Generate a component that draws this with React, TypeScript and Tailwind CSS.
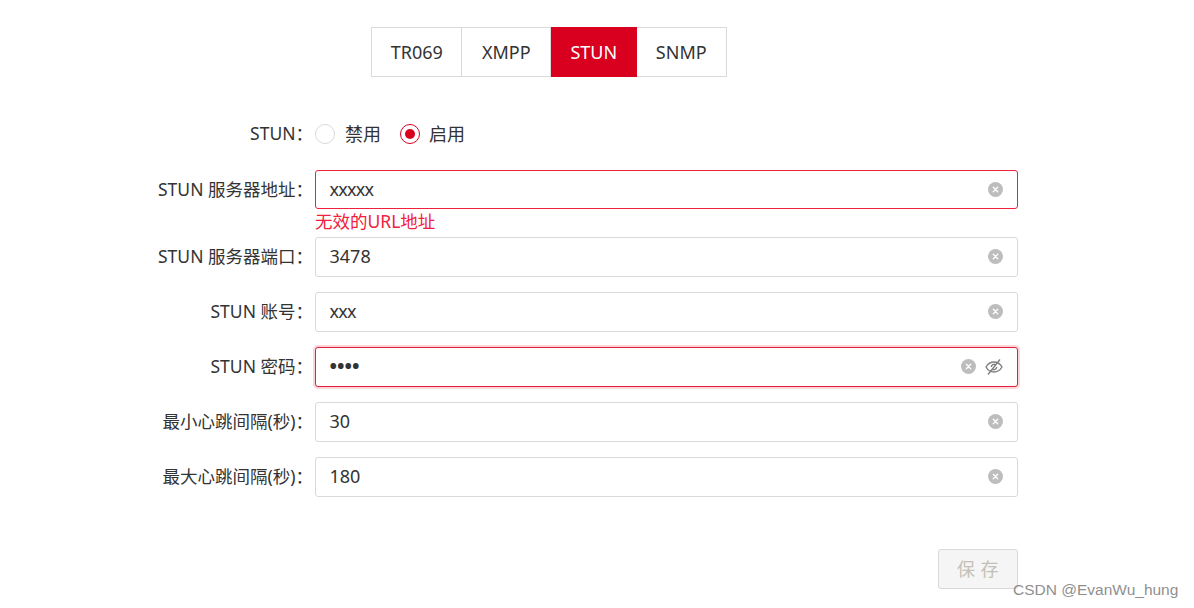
import { ReactNode } from 'react';

const font = { fontFamily: '"Noto Sans", "Noto Sans CJK SC", sans-serif' };

function ClearIcon() {
  return (
    <svg width="15" height="15" viewBox="0 0 15 15" className="mb-px shrink-0">
      <circle cx="7.500" cy="7.500" r="7.500" fill="#bdbdbd" />
      <path d="M5.300 5.300l4.400 4.400M9.700 5.300l-4.400 4.400" stroke="#fff" strokeWidth="1.300" strokeLinecap="round" />
    </svg>
  );
}

function EyeOffIcon() {
  return (
    <svg width="18" height="18" viewBox="0 0 18 18" fill="none" stroke="#808080" strokeWidth="1.400" className="shrink-0">
      <path d="M1 9c2-3.400 4.700-5 8-5s6 1.600 8 5c-2 3.400-4.700 5-8 5s-6-1.600-8-5z" />
      <path d="M6.300 9a2.700 2.700 0 0 1 4.400-2.100M11.700 9a2.700 2.700 0 0 1-4.400 2.100" />
      <path d="M15 1.500L3 16.500" />
    </svg>
  );
}

function Row({ label, children, className }: { label: string; children: ReactNode; className: string }) {
  return (
    <div className={`flex items-center ${className}`}>
      <label className="w-[315px] shrink-0 whitespace-nowrap pb-0.5 pr-[2px] text-right text-[17.500px] leading-6 text-[#333]">{label}：</label>
      {children}
    </div>
  );
}

function Field({ value, state, password, tight, height }: { value: string; state?: 'error' | 'focus'; password?: boolean; tight?: boolean; height?: string }) {
  const border =
    state === 'error'
      ? 'border-[#f0213c]'
      : state === 'focus'
        ? 'border-[#e0203a] shadow-[0_0_0_2px_#fbd5da]'
        : 'border-[#d9d9d9]';
  return (
    <div className={`flex w-[703px] items-center rounded-[3px] border bg-white pl-[13.500px] pr-[14px] ${height ?? 'h-10'} ${border}`}>
      <span className={`flex-1 pb-0.5 leading-6 text-[#333] ${password ? 'text-[20px] font-bold' : 'text-[18px]'} ${tight ? 'tracking-[-0.8px]' : ''}`}>{value}</span>
      <ClearIcon />
      {password && (
        <span className="ml-[9px]">
          <EyeOffIcon />
        </span>
      )}
    </div>
  );
}

const tabs = ['TR069', 'XMPP', 'STUN', 'SNMP'];
const tabWidths = ['w-[91px]', 'w-[89px]', 'w-[86px]', 'w-[90px]'];

export default function App() {
  return (
    <div className="relative h-[608px] w-[1194px] overflow-hidden bg-white pt-[27px]" style={font}>
      <div className="ml-[371px] flex h-[50px] w-[356px] border border-[#d9d9d9]">
        {tabs.map((tab, i) => (
          <div
            key={tab}
            className={`flex items-center justify-center pt-px text-[18px] ${tabWidths[i]} ${
              tab === 'STUN'
                ? '-my-px bg-[#d9001f] text-white'
                : i < 2
                  ? 'border-r border-[#d9d9d9] text-[#333]'
                  : 'text-[#333]'
            }`}
          >
            {tab}
          </div>
        ))}
      </div>

      <Row label="STUN" className="mt-[45px] h-6">
        <div className="flex items-center text-[18px] text-[#333]">
          <span className="h-5 w-5 rounded-full border border-[#d9d9d9] bg-white" />
          <span className="ml-2.5">禁用</span>
          <span className="ml-[19px] flex h-5 w-5 items-center justify-center rounded-full border border-[#d9001f]">
            <span className="h-2.5 w-2.5 rounded-full bg-[#d9001f]" />
          </span>
          <span className="ml-[9px]">启用</span>
        </div>
      </Row>

      <Row label="STUN 服务器地址" className="mt-6">
        <Field value="xxxxx" state="error" tight height="h-[39px]" />
      </Row>
      <div className="ml-[315px] h-[28px] pb-1 text-[17.500px] leading-[24px] text-[#f0213c]">无效的URL地址</div>
      <div className="flex flex-col gap-[15px]">
        <Row label="STUN 服务器端口" className="">
          <Field value="3478" />
        </Row>
        <Row label="STUN 账号" className="">
          <Field value="xxx" tight />
        </Row>
        <Row label="STUN 密码" className="">
          <Field value="••••" state="focus" password />
        </Row>
        <Row label="最小心跳间隔(秒)" className="">
          <Field value="30" />
        </Row>
        <Row label="最大心跳间隔(秒)" className="">
          <Field value="180" />
        </Row>
      </div>

      <button className="ml-[938px] mt-[52px] flex h-10 w-20 items-center justify-center rounded-[3px] border border-[#d9d9d9] bg-[#f5f5f5] text-[18px] tracking-[0.5px] text-[#c4c0b8]">
        保 存
      </button>

      <div className="absolute left-[1013px] top-[580px] text-[15.500px] leading-5 text-[#8f8f8f]" style={{ fontFamily: '"Liberation Sans", sans-serif' }}>
        CSDN @EvanWu_hung
      </div>
    </div>
  );
}
